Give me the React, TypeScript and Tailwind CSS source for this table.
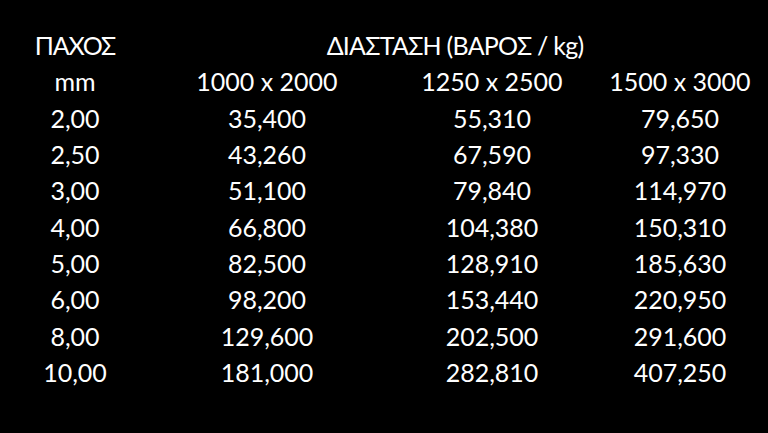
const rows = [
  ['2,00', '35,400', '55,310', '79,650'],
  ['2,50', '43,260', '67,590', '97,330'],
  ['3,00', '51,100', '79,840', '114,970'],
  ['4,00', '66,800', '104,380', '150,310'],
  ['5,00', '82,500', '128,910', '185,630'],
  ['6,00', '98,200', '153,440', '220,950'],
  ['8,00', '129,600', '202,500', '291,600'],
  ['10,00', '181,000', '282,810', '407,250'],
];

export default function App() {
  return (
    <div className="h-[433px] w-[768px] overflow-hidden bg-black pt-[27px] font-['Lato','Open_Sans',sans-serif] text-[25px] leading-[36.33px] text-white">
      <div className="grid grid-cols-[150px_234px_216px_160px] text-center">
        <div className="tracking-[-1.2px]">ΠΑΧΟΣ</div>
        <div className="col-span-3 tracking-[-0.75px]">ΔΙΑΣΤΑΣΗ (ΒΑΡΟΣ / kg)</div>
        <div>mm</div>
        <div>1000 x 2000</div>
        <div>1250 x 2500</div>
        <div>1500 x 3000</div>
        {rows.map((r) =>
          r.map((c, i) => <div key={r[0] + i}>{c}</div>)
        )}
      </div>
    </div>
  );
}
